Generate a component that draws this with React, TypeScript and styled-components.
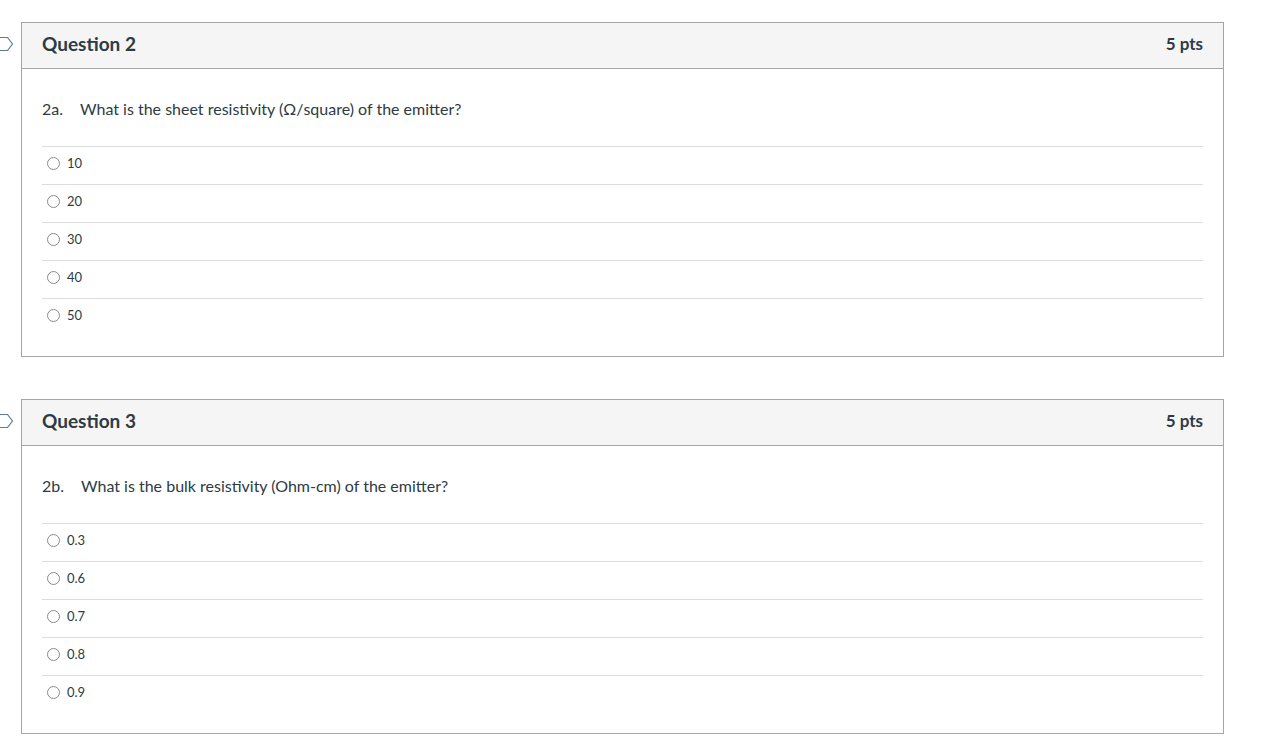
import React from "react";
import styled, { createGlobalStyle } from "styled-components";

const Global = createGlobalStyle`
  html, body { margin: 0; padding: 0; background: #fff; }
  body { font-family: Lato, "Liberation Sans", sans-serif; color: #2d3b45; }
`;

const Page = styled.div`
  padding: 22px 0 0 21px;
  display: flex;
  flex-direction: column;
  gap: 42px;
  width: 1203px;
`;

const Card = styled.section`
  position: relative;
  border: 1px solid #a5a5a5;
  background: #fff;
`;

const Marker = styled.svg`
  position: absolute;
  left: -22px;
  top: 13px;
`;

const Header = styled.header`
  box-sizing: border-box;
  display: flex;
  align-items: center;
  justify-content: space-between;
  height: 46px;
  padding: 0 20px 5px 20px;
  background: #f5f5f5;
  border-bottom: 1px solid #a5a5a5;
`;

const Title = styled.h2`
  margin: 0;
  font-size: 19px;
  font-weight: 700;
  color: #2d3b45;
`;

const Points = styled.span`
  font-size: 17px;
  font-weight: 700;
  color: #2d3b45;
`;

const Body = styled.div`
  padding: 20px 20px 20px 20px;
`;

const Prompt = styled.p`
  margin: 0 0 27px 0;
  padding-top: 10px;
  display: flex;
  font-size: 16px;
  line-height: 20px;
`;

const Label = styled.span<{ $w: number }>`
  display: inline-block;
  width: ${(p) => p.$w}px;
`;

const Answers = styled.div`
  display: flex;
  flex-direction: column;
`;

const Row = styled.label`
  display: flex;
  align-items: center;
  gap: 7px;
  border-top: 1px solid #dcdcdc;
  padding: 7px 0 12px 5px;
  height: 18px;
  font-size: 13px;
`;

const Radio = styled.span`
  width: 11px;
  height: 11px;
  border: 1px solid #8a8a8a;
  border-radius: 50%;
  box-sizing: content-box;
  flex: none;
`;

type Q = { title: string; label: string; labelW: number; text: string; options: string[] };

const questions: Q[] = [
  {
    title: "Question 2",
    label: "2a.",
    labelW: 38,
    text: "What is the sheet resistivity (Ω/square) of the emitter?",
    options: ["10", "20", "30", "40", "50"],
  },
  {
    title: "Question 3",
    label: "2b.",
    labelW: 39,
    text: "What is the bulk resistivity (Ohm-cm) of the emitter?",
    options: ["0.3", "0.6", "0.7", "0.8", "0.9"],
  },
];

export default function App() {
  return (
    <>
      <Global />
      <Page>
        {questions.map((q) => (
          <Card key={q.title}>
            <Marker width="14" height="16" viewBox="0 0 14 16">
              <path d="M-4 1.5 H7.5 L12.5 8 L7.5 14.5 H-4" fill="#fff" stroke="#5e7c96" strokeWidth="1.2" />
            </Marker>
            <Header>
              <Title>{q.title}</Title>
              <Points>5 pts</Points>
            </Header>
            <Body>
              <Prompt>
                <Label $w={q.labelW}>{q.label}</Label>
                <span>{q.text}</span>
              </Prompt>
              <Answers>
                {q.options.map((o) => (
                  <Row key={o}>
                    <Radio />
                    <span>{o}</span>
                  </Row>
                ))}
              </Answers>
            </Body>
          </Card>
        ))}
      </Page>
    </>
  );
}
